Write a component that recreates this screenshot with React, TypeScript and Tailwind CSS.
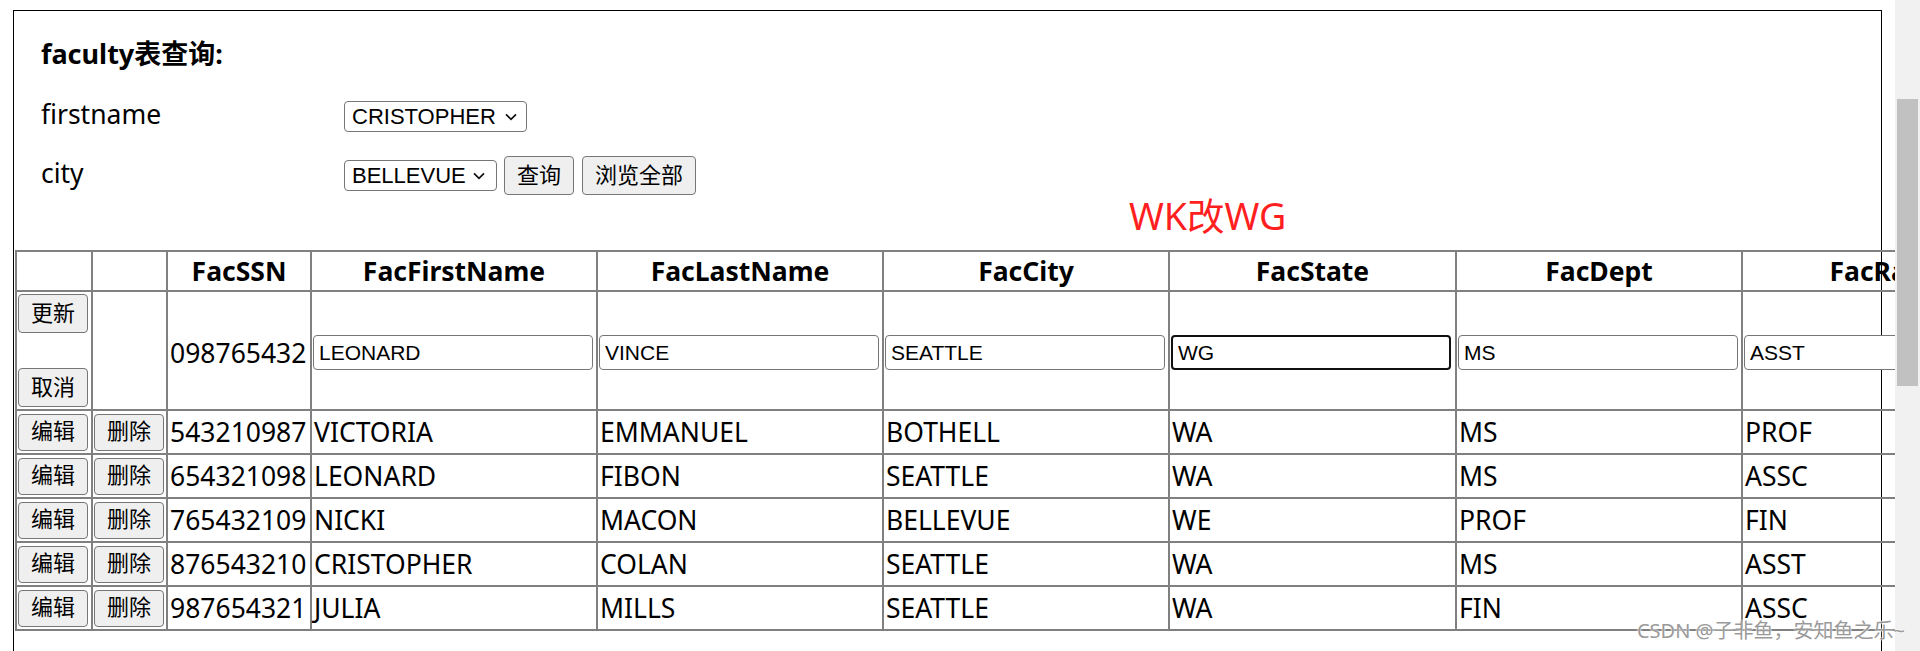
import React, { useState } from 'react';

const COLUMNS = ['FacSSN', 'FacFirstName', 'FacLastName', 'FacCity', 'FacState', 'FacDept', 'FacRank'];

const FACULTY = [
  ['543210987', 'VICTORIA', 'EMMANUEL', 'BOTHELL', 'WA', 'MS', 'PROF'],
  ['654321098', 'LEONARD', 'FIBON', 'SEATTLE', 'WA', 'MS', 'ASSC'],
  ['765432109', 'NICKI', 'MACON', 'BELLEVUE', 'WE', 'PROF', 'FIN'],
  ['876543210', 'CRISTOPHER', 'COLAN', 'SEATTLE', 'WA', 'MS', 'ASST'],
  ['987654321', 'JULIA', 'MILLS', 'SEATTLE', 'WA', 'FIN', 'ASSC'],
];

const EDITING = ['098765432', 'LEONARD', 'VINCE', 'SEATTLE', 'WG', 'MS', 'ASST'];

const FIRSTNAMES = ['CRISTOPHER', 'VICTORIA', 'LEONARD', 'NICKI', 'JULIA'];
const CITIES = ['BELLEVUE', 'SEATTLE', 'BOTHELL'];

const ctl = "font-['Liberation_Sans','Noto_Sans_CJK_SC',sans-serif] text-black";
const cell = 'border-2 border-[#808080] p-0 align-middle';

function Btn({ children, tall }: { children: React.ReactNode; tall?: boolean }) {
  return (
    <button
      className={`${ctl} block w-[70px] ${tall ? 'h-[39px]' : 'h-[37px]'} rounded-[4px] border border-[#767676] bg-[#efefef] text-[22px] leading-[30px] cursor-pointer`}
    >
      {children}
    </button>
  );
}

function Dropdown({ value, options, width, arrow }: { value: string; options: string[]; width: string; arrow: string }) {
  const [v, setV] = useState(value);
  return (
    <span className="relative inline-block">
      <select
        value={v}
        onChange={(e) => setV(e.target.value)}
        className={`${ctl} ${width} h-[31px] appearance-none rounded-[4px] border border-[#767676] bg-white pl-[7px] text-[22px] leading-[29px]`}
      >
        {options.map((o) => (
          <option key={o} value={o}>{o}</option>
        ))}
      </select>
      <svg className={`pointer-events-none absolute top-[12px] ${arrow}`} width="12" height="8" viewBox="0 0 12 8">
        <path d="M1 1.3l5 5 5-5" stroke="#111" strokeWidth="1.7" fill="none" />
      </svg>
    </span>
  );
}

export default function App() {
  return (
    <div className="flex w-[1920px] h-[651px] overflow-hidden bg-white font-['Noto_Sans','Noto_Sans_CJK_SC',sans-serif] text-black relative">
      <div className="w-[1895px] shrink-0 overflow-hidden">
        <div className="ml-[13px] mt-[10px] w-[1869px] border border-black pb-[60px]">
          <div className="pl-[27px] pt-[25px]">
            <h4 className="text-[27px] font-bold leading-[36px]">faculty表查询:</h4>

            <div className="mt-[24px] flex items-baseline">
              <span className="w-[303px] text-[26.5px] leading-[36px]">firstname</span>
              <Dropdown value="CRISTOPHER" options={FIRSTNAMES} width="w-[183px]" arrow="right-[10px]" />
            </div>

            <div className="mt-[23px] flex items-baseline">
              <span className="w-[303px] text-[26.5px] leading-[36px]">city</span>
              <Dropdown value="BELLEVUE" options={CITIES} width="w-[153px]" arrow="right-[12px]" />
              <button className={`${ctl} ml-[7px] h-[39px] rounded-[4px] border border-[#767676] bg-[#efefef] px-[12px] text-[22px] leading-[37px]`}>查询</button>
              <button className={`${ctl} ml-[8px] h-[39px] rounded-[4px] border border-[#767676] bg-[#efefef] px-[12px] text-[22px] leading-[37px]`}>浏览全部</button>
            </div>
          </div>

          <div className="-mt-[3px] h-[48px] pl-[1115px] text-[37.5px] leading-[48px] text-[#ff1f1f]">WK改WG</div>

          <table className="ml-[1px] mt-[10px] w-[2012px] table-fixed border-collapse">
            <colgroup>
              <col className="w-[76px]" />
              <col className="w-[75px]" />
              <col className="w-[144px]" />
              <col className="w-[286px]" />
              <col className="w-[286px]" />
              <col className="w-[286px]" />
              <col className="w-[287px]" />
              <col className="w-[286px]" />
              <col className="w-[286px]" />
            </colgroup>
            <thead>
              <tr className="h-[40px]">
                <th className={cell}></th>
                <th className={cell}></th>
                {COLUMNS.map((c) => (
                  <th key={c} className={`${cell} text-center text-[26.5px] font-bold leading-[36px]`}>{c}</th>
                ))}
              </tr>
            </thead>
            <tbody>
              <tr className="h-[119px]">
                <td className={`${cell} px-[1px]`}>
                  <div className="flex flex-col gap-[35px]">
                    <Btn tall>更新</Btn>
                    <Btn tall>取消</Btn>
                  </div>
                </td>
                <td className={cell}></td>
                <td className={`${cell} px-[2px] pt-[4px] text-[26.5px] leading-[36px]`}>{EDITING[0]}</td>
                {EDITING.slice(1).map((val, i) => (
                  <td key={i} className={`${cell} px-[1px] pt-[4px]`}>
                    <input
                      defaultValue={val}
                      className={`${ctl} block h-[35px] w-[280px] rounded-[4px] bg-white pl-[5px] text-[21px] outline-none ${
                        val === 'WG' ? 'border-2 border-[#101010] pl-[4px]' : 'border border-[#767676]'
                      }`}
                    />
                  </td>
                ))}
              </tr>
              {FACULTY.map((row) => (
                <tr key={row[0]} className="h-[44px]">
                  <td className={`${cell} px-[1px]`}>
                    <Btn>编辑</Btn>
                  </td>
                  <td className={`${cell} px-[1px]`}>
                    <Btn>删除</Btn>
                  </td>
                  {row.map((val, i) => (
                    <td key={i} className={`${cell} px-[2px] text-[26.5px] leading-[36px] whitespace-nowrap`}>{val}</td>
                  ))}
                </tr>
              ))}
            </tbody>
          </table>
        </div>
      </div>

      <div className="w-[25px] shrink-0 bg-[#f1f1f1] px-[2px]">
        <div className="mt-[99px] h-[287px] bg-[#c1c1c1]"></div>
      </div>

      <div className="absolute right-[15px] top-[618px] text-[20px] leading-[26px] text-[#9a9a9a] [text-shadow:0_0_2px_#fff,0_0_2px_#fff]">
        CSDN @子非鱼，安知鱼之乐~
      </div>
    </div>
  );
}
